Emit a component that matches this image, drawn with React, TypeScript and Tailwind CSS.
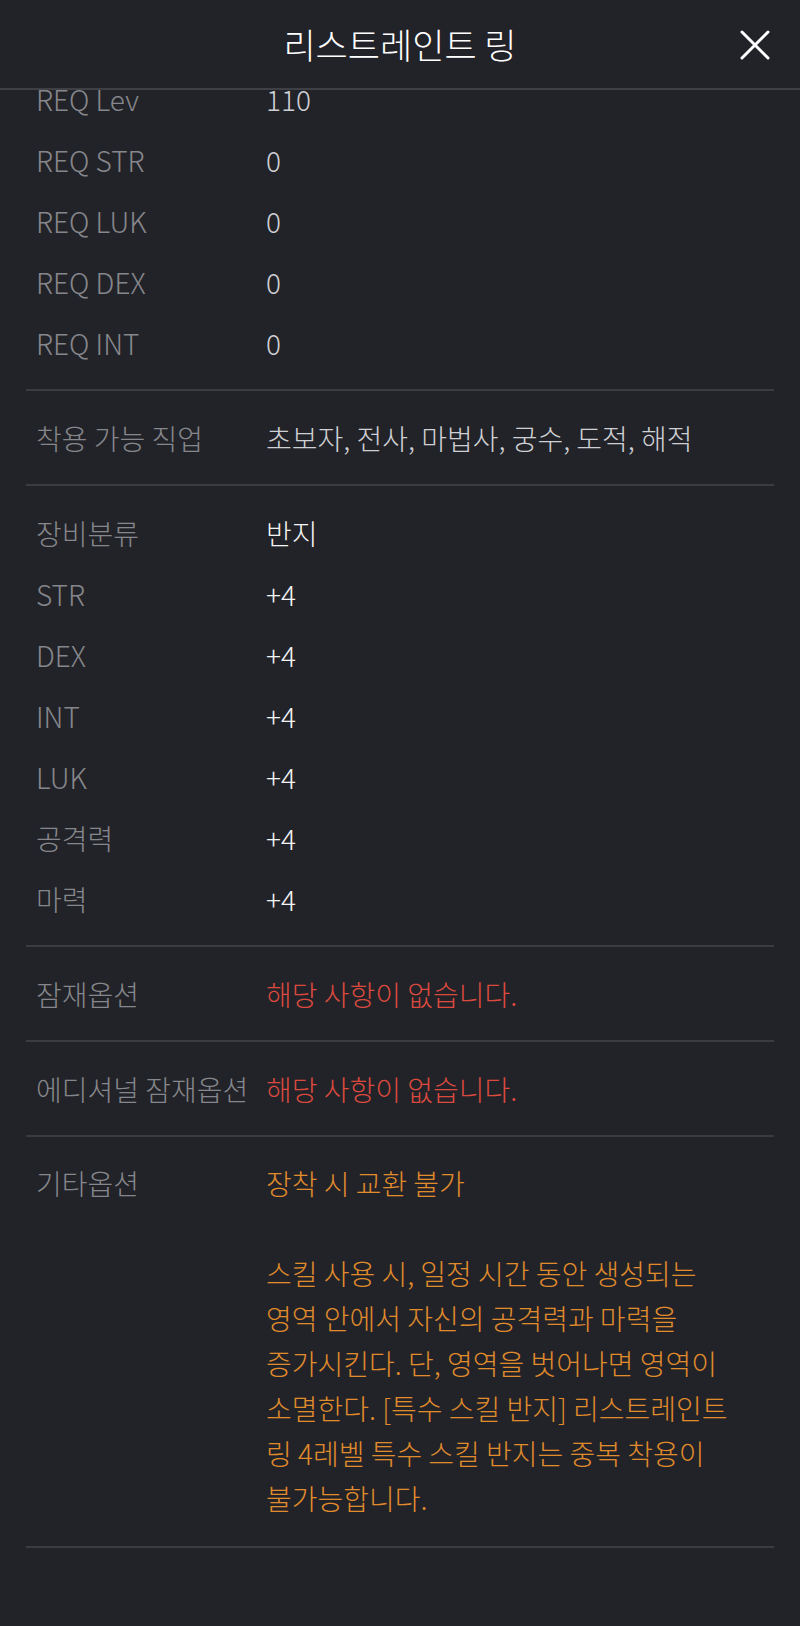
import React from 'react';

type Row = { label: string; value: string; tone?: 'dim' | 'bright' | 'red' };

const FONT = { fontFamily: '"Noto Sans CJK KR", "Noto Sans", sans-serif' };

const reqRows: Row[] = [
  { label: 'REQ Lev', value: '110', tone: 'dim' },
  { label: 'REQ STR', value: '0', tone: 'dim' },
  { label: 'REQ LUK', value: '0', tone: 'dim' },
  { label: 'REQ DEX', value: '0', tone: 'dim' },
  { label: 'REQ INT', value: '0', tone: 'dim' },
];

const statRows: Row[] = [
  { label: '장비분류', value: '반지' },
  { label: 'STR', value: '+4' },
  { label: 'DEX', value: '+4' },
  { label: 'INT', value: '+4' },
  { label: 'LUK', value: '+4' },
  { label: '공격력', value: '+4' },
  { label: '마력', value: '+4' },
];

const descLines = [
  '스킬 사용 시, 일정 시간 동안 생성되는',
  '영역 안에서 자신의 공격력과 마력을',
  '증가시킨다. 단, 영역을 벗어나면 영역이',
  '소멸한다. [특수 스킬 반지] 리스트레인트',
  '링 4레벨 특수 스킬 반지는 중복 착용이',
  '불가능합니다.',
];

const toneClass = {
  dim: 'text-[#cfd0d4]',
  bright: 'text-[#f4f4f6]',
  red: 'text-[#dc4a3f]',
};

const InfoRow = ({ label, value, tone = 'bright' }: Row) => (
  <div className="flex h-[61px] items-center">
    <div className="w-[230px] shrink-0 text-[#86878c]">{label}</div>
    <div className={toneClass[tone]}>{value}</div>
  </div>
);

const Section = ({ children, className = 'py-[16px]' }: { children: React.ReactNode; className?: string }) => (
  <div className={`border-b-2 border-[#3b3c41] pl-[10px] ${className}`}>{children}</div>
);

export default function App() {
  return (
    <div className="min-h-[1626px] w-full bg-[#222328] text-[28px] font-light" style={FONT}>
      {/* Header */}
      <div className="relative z-10 flex h-[90px] items-center justify-center border-b-2 border-[#3f4045] bg-[#222328]">
        <span className="text-[35px] text-white">리스트레인트 링</span>
        <button className="absolute right-[30px] top-[30px] h-[30px] w-[30px]">
          <svg viewBox="0 0 30 30" className="h-[30px] w-[30px]">
            <path d="M2 2 L28 28 M28 2 L2 28" stroke="white" strokeWidth="3" strokeLinecap="round" />
          </svg>
        </button>
      </div>

      {/* Scrolled content */}
      <div className="overflow-hidden">
        <div className="-mt-[22px] px-[26px]">
          <Section className="pb-[16px]">
            {reqRows.map((row) => (
              <InfoRow key={row.label} {...row} />
            ))}
          </Section>

          <Section>
            <InfoRow label="착용 가능 직업" value="초보자, 전사, 마법사, 궁수, 도적, 해적" tone="dim" />
          </Section>

          <Section>
            {statRows.map((row) => (
              <InfoRow key={row.label} {...row} />
            ))}
          </Section>

          <Section>
            <InfoRow label="잠재옵션" value="해당 사항이 없습니다." tone="red" />
          </Section>

          <Section>
            <InfoRow label="에디셔널 잠재옵션" value="해당 사항이 없습니다." tone="red" />
          </Section>

          <Section className="pt-[24px] pb-[25px]">
            <div className="flex leading-[45px]">
              <div className="w-[230px] shrink-0 text-[#86878c]">기타옵션</div>
              <div className="text-[#e08b2c]">
                <div>장착 시 교환 불가</div>
                <div className="h-[45px]" />
                {descLines.map((line) => (
                  <div key={line} className="whitespace-nowrap">
                    {line}
                  </div>
                ))}
              </div>
            </div>
          </Section>
        </div>
      </div>
    </div>
  );
}
